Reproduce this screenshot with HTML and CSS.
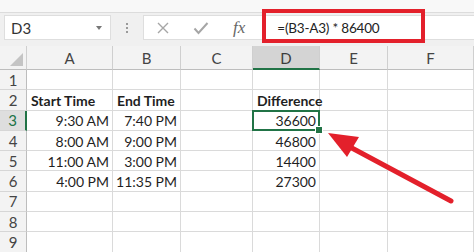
FILE: index.html
```html
<!DOCTYPE html>
<html lang="en">
<head>
    <meta charset="UTF-8">
    <title>Time Difference in Seconds</title>
    <link rel="stylesheet" href="styles.css">
</head>
<body>

<div class="app">
    <div class="ribbon-edge"></div>

    <div class="formula-bar">
        <div class="name-box">
            <span>D3</span>
            <span class="caret"></span>
        </div>
        <div class="grip"><i></i><i></i><i></i></div>
        <div class="formula-box">
            <svg class="fb-icon" width="14" height="14" viewBox="0 0 14 14">
                <path d="M2 2 L12 12 M12 2 L2 12" stroke="#a6a6a6" stroke-width="1.4" fill="none"/>
            </svg>
            <svg class="fb-icon" width="16" height="14" viewBox="0 0 16 14">
                <path d="M1.5 7.5 L5.5 12 L14.5 2" stroke="#a6a6a6" stroke-width="2" fill="none"/>
            </svg>
            <span class="fx">fx</span>
            <span class="formula-text">=(B3-A3) * 86400</span>
        </div>
    </div>

    <div class="sheet">
        <div class="corner"><span class="corner-tri"></span></div>
        <div class="col-head">A</div>
        <div class="col-head">B</div>
        <div class="col-head">C</div>
        <div class="col-head active">D</div>
        <div class="col-head">E</div>
        <div class="col-head">F</div>

        <div class="row-head">1</div>
        <div class="cell"></div><div class="cell"></div><div class="cell"></div><div class="cell"></div><div class="cell"></div><div class="cell"></div>

        <div class="row-head">2</div>
        <div class="cell bold">Start Time</div>
        <div class="cell bold">End Time</div>
        <div class="cell"></div>
        <div class="cell bold">Difference</div>
        <div class="cell"></div><div class="cell"></div>

        <div class="row-head active">3</div>
        <div class="cell num">9:30 AM</div>
        <div class="cell num">7:40 PM</div>
        <div class="cell"></div>
        <div class="cell num selected">36600</div>
        <div class="cell"></div><div class="cell"></div>

        <div class="row-head">4</div>
        <div class="cell num">8:00 AM</div>
        <div class="cell num">9:00 PM</div>
        <div class="cell"></div>
        <div class="cell num">46800</div>
        <div class="cell"></div><div class="cell"></div>

        <div class="row-head">5</div>
        <div class="cell num">11:00 AM</div>
        <div class="cell num">3:00 PM</div>
        <div class="cell"></div>
        <div class="cell num">14400</div>
        <div class="cell"></div><div class="cell"></div>

        <div class="row-head">6</div>
        <div class="cell num">4:00 PM</div>
        <div class="cell num">11:35 PM</div>
        <div class="cell"></div>
        <div class="cell num">27300</div>
        <div class="cell"></div><div class="cell"></div>

        <div class="row-head">7</div>
        <div class="cell"></div><div class="cell"></div><div class="cell"></div><div class="cell"></div><div class="cell"></div><div class="cell"></div>

        <div class="row-head">8</div>
        <div class="cell"></div><div class="cell"></div><div class="cell"></div><div class="cell"></div><div class="cell"></div><div class="cell"></div>

        <div class="row-head">9</div>
        <div class="cell"></div><div class="cell"></div><div class="cell"></div><div class="cell"></div><div class="cell"></div><div class="cell"></div>
    </div>

    <!-- annotation overlays -->
    <div class="callout"></div>
    <svg class="arrow" width="474" height="252" viewBox="0 0 474 252">
        <line x1="350" y1="147" x2="451" y2="201" stroke="#e3202b" stroke-width="5" stroke-linecap="round"/>
        <polygon points="328,133 359,137 347,157" fill="#e3202b"/>
    </svg>
</div>

</body>
</html>
```

FILE: styles.css
```css
* {
    box-sizing: border-box;
}

body {
    margin: 0;
    background-color: #fff;
    font-family: Lato, "Liberation Sans", sans-serif;
    color: #1f1f1f;
}

.app {
    position: relative;
    width: 474px;
    height: 252px;
    overflow: hidden;
}

.ribbon-edge {
    height: 13px;
    background-color: #f8f8f8;
    border-bottom: 1px solid #dcdcdc;
}

.formula-bar {
    display: flex;
    align-items: center;
    height: 33px;
    background-color: #f0f0f0;
    padding: 2px 0 6px 4px;
}

.name-box {
    display: flex;
    align-items: center;
    justify-content: space-between;
    width: 107px;
    height: 25px;
    background-color: #fff;
    border: 1px solid #dedede;
    padding: 0 8px 0 6px;
    font-size: 15px;
    color: #333;
}

.caret {
    width: 0;
    height: 0;
    border-left: 3px solid transparent;
    border-right: 3px solid transparent;
    border-top: 4px solid #777;
}

.grip {
    display: flex;
    flex-direction: column;
    gap: 2px;
    width: 32px;
    align-items: center;
}

.grip i {
    width: 2px;
    height: 2px;
    background-color: #9a9a9a;
}

.formula-box {
    flex: 1;
    display: flex;
    align-items: center;
    height: 25px;
    background-color: #fff;
    border: 1px solid #dedede;
    border-right: none;
    padding-left: 12px;
}

.fb-icon {
    margin-right: 23px;
}

.fx {
    font-family: "Liberation Serif", serif;
    font-style: italic;
    font-size: 17px;
    color: #666;
    margin-left: 1px;
}

.formula-text {
    margin-left: 32px;
    font-size: 13.5px;
    letter-spacing: -0.2px;
    color: #222;
}

.sheet {
    display: grid;
    grid-template-columns: 27px 86px 68px 72px 67px 68px 1fr;
    grid-template-rows: 24px repeat(9, 20.3px);
}

.corner,
.col-head,
.row-head {
    background-color: #f3f3f3;
    color: #444;
    border-right: 1px solid #cfcfcf;
    border-bottom: 1px solid #bdbdbd;
    font-size: 15px;
    display: flex;
    align-items: center;
    justify-content: center;
}

.corner {
    position: relative;
}

.corner-tri {
    position: absolute;
    right: 3px;
    bottom: 3px;
    width: 0;
    height: 0;
    border-left: 13px solid transparent;
    border-bottom: 13px solid #c4c4c4;
}

.col-head {
    padding-top: 1px;
}

.col-head.active {
    background-color: #d4d4d4;
    color: #3c3c3c;
    border-bottom: 2px solid #217346;
}

.row-head {
    border-bottom: 1px solid #d6d6d6;
    border-right: 1px solid #bdbdbd;
}

.row-head.active {
    background-color: #dedede;
    color: #217346;
    border-right: 2px solid #217346;
}

.cell {
    display: flex;
    align-items: center;
    padding: 1px 3px 0 4px;
    border-right: 1px solid #dadada;
    border-bottom: 1px solid #dadada;
    font-size: 14px;
    white-space: nowrap;
    overflow: visible;
}

.cell.bold {
    font-weight: bold;
}

.cell.num {
    justify-content: flex-end;
}

.cell.selected {
    position: relative;
}

.cell.selected::after {
    content: "";
    position: absolute;
    left: -1px;
    top: -1px;
    right: -1px;
    bottom: -1px;
    border: 2px solid #217346;
}

.cell.selected::before {
    content: "";
    position: absolute;
    right: -4px;
    bottom: -4px;
    width: 6px;
    height: 6px;
    background-color: #217346;
    border: 1px solid #fff;
    z-index: 1;
}

.callout {
    position: absolute;
    left: 262px;
    top: 9px;
    width: 163px;
    height: 34px;
    border: 4px solid #e3202b;
}

.arrow {
    position: absolute;
    left: 0;
    top: 0;
}
```
